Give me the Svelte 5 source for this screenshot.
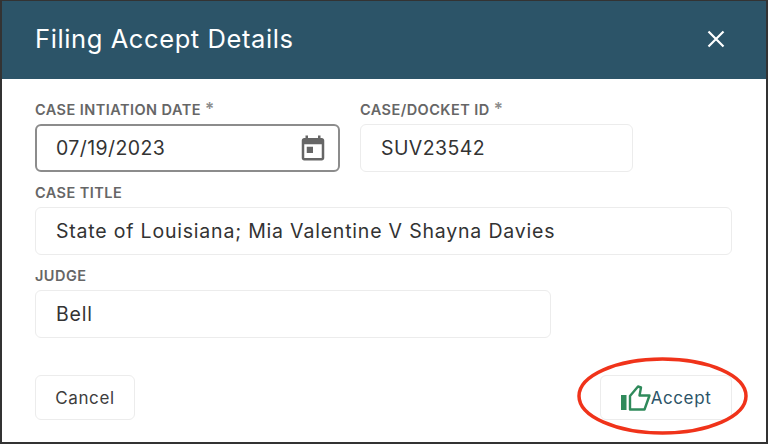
<script>
  const row1 = [
    { label: 'CASE INTIATION DATE', required: true, value: '07/19/2023', cls: 'date' },
    { label: 'CASE/DOCKET ID', required: true, value: 'SUV23542', cls: 'docket' }
  ];
</script>

<div class="frame">
  <header class="modal-header">
    <h1>Filing Accept Details</h1>
    <svg class="close" viewBox="0 0 18 18" width="18" height="18" aria-label="Close">
      <path d="M1.5 1.5 L16.5 16.5 M16.5 1.5 L1.5 16.5" stroke="#fff" stroke-width="2.2" fill="none" />
    </svg>
  </header>

  <div class="modal-body">
    <div class="row">
      {#each row1 as field}
        <div class="field {field.cls}">
          <div class="label">{field.label} <span class="req">*</span></div>
          <div class="input">
            <span>{field.value}</span>
            {#if field.cls === 'date'}
              <svg class="cal" viewBox="0 0 24 24" width="30" height="30">
                <path fill="#666" d="M19 4h-1V2h-2v2H8V2H6v2H5c-1.1 0-2 .9-2 2v14c0 1.1.9 2 2 2h14c1.1 0 2-.9 2-2V6c0-1.1-.9-2-2-2zm0 16H5V9h14v11zM7 11h5v5H7z" />
              </svg>
            {/if}
          </div>
        </div>
      {/each}
    </div>

    <div class="field title">
      <div class="label">CASE TITLE</div>
      <div class="input text"><span>State of Louisiana; Mia Valentine V Shayna Davies</span></div>
    </div>

    <div class="field judge">
      <div class="label">JUDGE</div>
      <div class="input text"><span>Bell</span></div>
    </div>

    <div class="actions">
      <button class="btn cancel">Cancel</button>
      <div class="accept-wrap">
        <button class="btn accept">
          <svg viewBox="0 0 30 26" width="30" height="26">
            <rect x="0" y="10" width="5.5" height="15" fill="#2f8a5b" />
            <path d="M9 11 L17 1.5 L20 2.5 L18.5 10.5 L28.5 10.5 L23.5 24.5 L9 24.5 Z" fill="none" stroke="#2f8a5b" stroke-width="2.4" stroke-linejoin="round" />
          </svg>
          <span>Accept</span>
        </button>
        <svg class="ring" viewBox="0 0 172 78" width="172" height="78">
          <ellipse cx="85.5" cy="39" rx="83.5" ry="37" fill="none" stroke="#f0331a" stroke-width="3.5" />
        </svg>
      </div>
    </div>
  </div>
</div>

<style>
  :global(body) {
    margin: 0;
    background: #fff;
  }

  .frame {
    width: 768px;
    height: 444px;
    box-sizing: border-box;
    border: 2px solid #333;
    border-top-width: 1px;
    background: #fff;
    font-family: Inter, "Noto Sans", sans-serif;
    overflow: hidden;
  }

  .modal-header {
    height: 78px;
    box-sizing: border-box;
    background: #2c5468;
    display: flex;
    align-items: center;
    justify-content: space-between;
    padding: 0 41px 3px 33px;
  }

  h1 {
    margin: 0;
    color: #fff;
    font-size: 25.5px;
    font-weight: 400;
    letter-spacing: 0.6px;
  }

  .modal-body {
    padding: 21px 34px 0 33px;
  }

  .row {
    display: flex;
    gap: 20px;
  }

  .field {
    display: flex;
    flex-direction: column;
  }

  .date { width: 305px; }
  .docket { width: 273px; }
  .judge { width: 516px; }

  .title { margin-top: 11px; }
  .judge { margin-top: 11px; }

  .label {
    height: 24px;
    color: #666;
    font-family: Inter, sans-serif;
    font-size: 14.5px;
    font-weight: 600;
    letter-spacing: 0.45px;
    line-height: 20px;
  }

  .req {
    color: #8d8d8d;
    font-size: 17px;
    line-height: 14px;
  }

  .input {
    height: 48px;
    box-sizing: border-box;
    border: 1px solid #ececec;
    border-radius: 6px;
    display: flex;
    align-items: center;
    justify-content: space-between;
    padding: 0 10px 0 20px;
    color: #333;
    font-size: 19.5px;
    letter-spacing: 0.4px;
  }

  .input.text {
    letter-spacing: 0.8px;
  }

  .date .input {
    border: 2px solid #8c8c8c;
    padding: 0 10px 0 19px;
  }

  .actions {
    margin-top: 37px;
    display: flex;
    justify-content: space-between;
    align-items: center;
  }

  .btn {
    height: 45px;
    box-sizing: border-box;
    background: #fff;
    border: 1px solid #ececec;
    border-radius: 6px;
    font-family: Inter, "Noto Sans", sans-serif;
    font-size: 17px;
    letter-spacing: 0.6px;
    padding: 0;
  }

  .cancel {
    width: 100px;
    color: #3d3d3d;
  }

  .accept-wrap {
    position: relative;
  }

  .accept {
    width: 132px;
    color: #2c5468;
    display: flex;
    align-items: center;
    justify-content: center;
    gap: 0;
  }

  .ring {
    position: absolute;
    left: -23px;
    top: -18px;
    pointer-events: none;
  }
</style>
